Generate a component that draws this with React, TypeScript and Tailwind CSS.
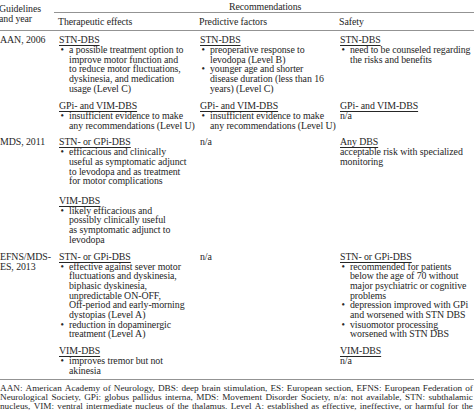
type Block = { title?: string; plain?: string[]; bullets?: string[][] };

const COLS = "grid grid-cols-[59px_141px_140px_1fr]";

function Group({ b }: { b?: Block }) {
  if (!b) return <div />;
  return (
    <div>
      {b.title && (
        <div className="whitespace-nowrap">
          <span className="underline decoration-[0.8px] underline-offset-[1.5px]">{b.title}</span>
        </div>
      )}
      {b.plain?.map((l) => (
        <div key={l} className="whitespace-nowrap">{l}</div>
      ))}
      {b.bullets?.map((lines, i) => (
        <div key={i} className="flex">
          <span className="w-[10px] shrink-0 pl-[1.5px]">•</span>
          <div>
            {lines.map((l) => (
              <div key={l} className="whitespace-nowrap">{l}</div>
            ))}
          </div>
        </div>
      ))}
    </div>
  );
}

const NA: Block = { plain: ["n/a"] };

const NOTES = [
  "AAN: American Academy of Neurology, DBS: deep brain stimulation, ES: European section, EFNS: European Federation of",
  "Neurological Society, GPi: globus pallidus interna, MDS: Movement Disorder Society, n/a: not available, STN: subthalamic",
  "nucleus, VIM: ventral intermediate nucleus of the thalamus. Level A: established as effective, ineffective, or harmful for the",
];

export default function App() {
  return (
    <div
      className="w-[474px] h-[414px] overflow-hidden bg-white text-[#262626] text-[9.9px] leading-[9.7px] tracking-[-0.08px]"
      style={{ fontFamily: '"Liberation Serif", "Times New Roman", serif' }}
    >
      {/* header */}
      <div className="flex border-b border-[#939393]">
        <div className="w-[55px] shrink-0 pt-[4px] -ml-[1px]">
          Guidelines
          <br />
          and year
        </div>
        <div className="flex-1">
          <div className="h-[13px] pt-[2px] pl-[175px] border-b border-[#939393] whitespace-nowrap">
            Recommendations
          </div>
          <div className="grid grid-cols-[141px_140px_1fr] pl-[4px] pt-[4px] pb-[3.3px]">
            <div>Therapeutic effects</div>
            <div>Predictive factors</div>
            <div>Safety</div>
          </div>
        </div>
      </div>

      {/* AAN */}
      <div className={`${COLS} gap-y-[8px] pt-[4.2px]`}>
        <div className="row-span-2 whitespace-nowrap">AAN, 2006</div>
        <Group
          b={{
            title: "STN-DBS",
            bullets: [
              [
                "a possible treatment option to",
                "improve motor function and",
                "to reduce motor fluctuations,",
                "dyskinesia, and medication",
                "usage (Level C)",
              ],
            ],
          }}
        />
        <Group
          b={{
            title: "STN-DBS",
            bullets: [
              ["preoperative response to", "levodopa (Level B)"],
              ["younger age and shorter", "disease duration (less than 16", "years) (Level C)"],
            ],
          }}
        />
        <Group
          b={{ title: "STN-DBS", bullets: [["need to be counseled regarding", "the risks and benefits"]] }}
        />
        <Group
          b={{
            title: "GPi- and VIM-DBS",
            bullets: [["insufficient evidence to make", "any recommendations (Level U)"]],
          }}
        />
        <Group
          b={{
            title: "GPi- and VIM-DBS",
            bullets: [["insufficient evidence to make", "any recommendations (Level U)"]],
          }}
        />
        <Group b={{ title: "GPi- and VIM-DBS", plain: ["n/a"] }} />
      </div>

      {/* MDS */}
      <div className={`${COLS} gap-y-[9.9px] pt-[6.9px]`}>
        <div className="row-span-2 whitespace-nowrap">MDS, 2011</div>
        <Group
          b={{
            title: "STN- or GPi-DBS",
            bullets: [
              [
                "efficacious and clinically",
                "useful as symptomatic adjunct",
                "to levodopa and as treatment",
                "for motor complications",
              ],
            ],
          }}
        />
        <Group b={NA} />
        <Group b={{ title: "Any DBS", plain: ["acceptable risk with specialized", "monitoring"] }} />
        <Group
          b={{
            title: "VIM-DBS",
            bullets: [
              ["likely efficacious and", "possibly clinically useful", "as symptomatic adjunct to", "levodopa"],
            ],
          }}
        />
        <div />
        <div />
      </div>

      {/* EFNS */}
      <div className={`${COLS} gap-y-[7px] pt-[7.5px] pb-[3.8px] border-b border-[#939393]`}>
        <div className="row-span-2 whitespace-nowrap">
          EFNS/MDS-
          <br />
          ES, 2013
        </div>
        <Group
          b={{
            title: "STN- or GPi-DBS",
            bullets: [
              [
                "effective against sever motor",
                "fluctuations and dyskinesia,",
                "biphasic dyskinesia,",
                "unpredictable ON-OFF,",
                "Off-period and early-morning",
                "dystopias (Level A)",
              ],
              ["reduction in dopaminergic", "treatment (Level A)"],
            ],
          }}
        />
        <Group b={NA} />
        <Group
          b={{
            title: "STN- or GPi-DBS",
            bullets: [
              [
                "recommended for patients",
                "below the age of 70 without",
                "major psychiatric or cognitive",
                "problems",
              ],
              ["depression improved with GPi", "and worsened with STN DBS"],
              ["visuomotor processing", "worsened with STN DBS"],
            ],
          }}
        />
        <Group b={{ title: "VIM-DBS", bullets: [["improves tremor but not", "akinesia"]] }} />
        <div />
        <Group b={{ title: "VIM-DBS", plain: ["n/a"] }} />
      </div>

      {/* footnote, justified lines */}
      <div className="pt-[3.5px] text-[9.2px] leading-[9px] tracking-normal">
        {NOTES.map((n) => (
          <div key={n} className="w-[473px] whitespace-nowrap flex justify-between">
            {n.split(" ").map((w, i) => (
              <span key={i}>{w}</span>
            ))}
          </div>
        ))}
      </div>
    </div>
  );
}
